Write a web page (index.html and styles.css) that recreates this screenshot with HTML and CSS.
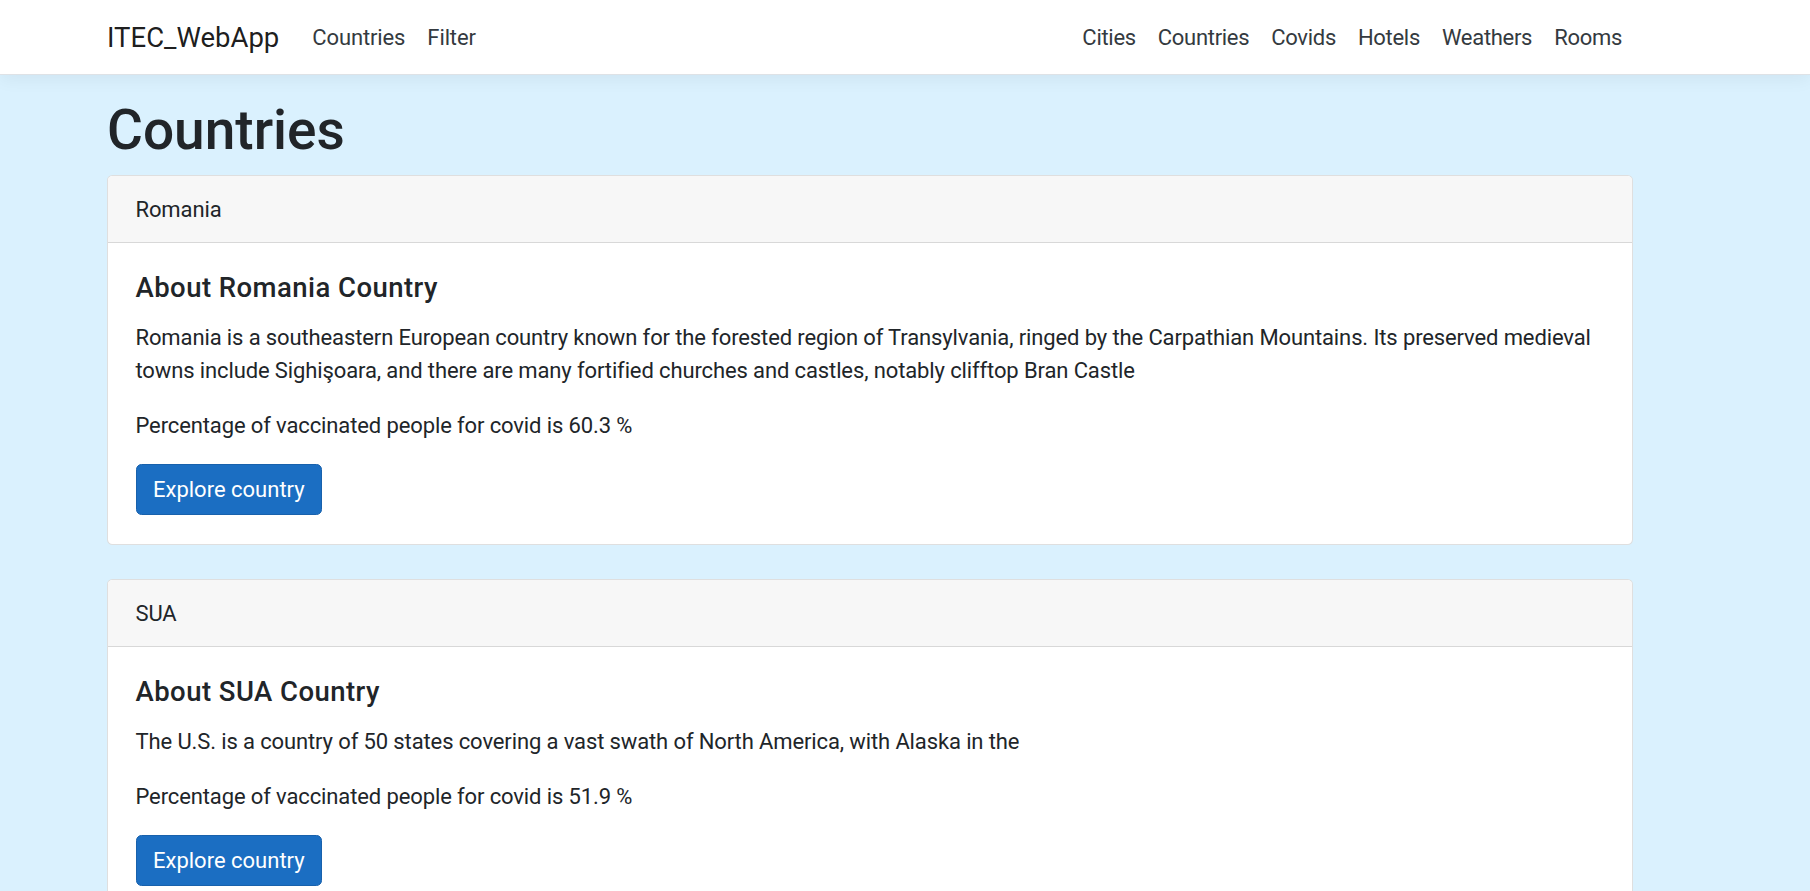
FILE: index.html
```html
<!DOCTYPE html>
<html lang="en">
<head>
<meta charset="utf-8">
<title>Countries - ITEC_WebApp</title>
<link rel="stylesheet" href="styles.css">
</head>
<body>
<nav class="navbar">
  <div class="container nav-inner">
    <a class="brand" href="#">ITEC_WebApp</a>
    <ul class="nav-list">
      <li><a class="nav-link" href="#">Countries</a></li>
      <li><a class="nav-link" href="#">Filter</a></li>
    </ul>
    <ul class="nav-list nav-right">
      <li><a class="nav-link" href="#">Cities</a></li>
      <li><a class="nav-link" href="#">Countries</a></li>
      <li><a class="nav-link" href="#">Covids</a></li>
      <li><a class="nav-link" href="#">Hotels</a></li>
      <li><a class="nav-link" href="#">Weathers</a></li>
      <li><a class="nav-link" href="#">Rooms</a></li>
    </ul>
  </div>
</nav>
<main class="container">
  <h1 class="page-title">Countries</h1>
  <div class="card">
    <div class="card-header">Romania</div>
    <div class="card-body">
      <h5 class="card-title">About Romania Country</h5>
      <p class="card-text">Romania is a southeastern European country known for the forested region of Transylvania, ringed by the Carpathian Mountains. Its preserved medieval towns include Sighişoara, and there are many fortified churches and castles, notably clifftop Bran Castle</p>
      <p class="card-text">Percentage of vaccinated people for covid is 60.3 %</p>
      <a class="btn" href="#">Explore country</a>
    </div>
  </div>
  <div class="card">
    <div class="card-header">SUA</div>
    <div class="card-body">
      <h5 class="card-title">About SUA Country</h5>
      <p class="card-text">The U.S. is a country of 50 states covering a vast swath of North America, with Alaska in the</p>
      <p class="card-text">Percentage of vaccinated people for covid is 51.9 %</p>
      <a class="btn" href="#">Explore country</a>
    </div>
  </div>
</main>
</body>
</html>
```
FILE: styles.css
```css
* { box-sizing: border-box; }
html, body { margin: 0; padding: 0; }
body {
  background: #daf1fe;
  color: #212529;
  font-family: Roboto, "Liberation Sans", sans-serif;
  font-size: 22px;
  line-height: 33px;
  letter-spacing: -0.12px;
}
a { text-decoration: none; }
.container {
  width: 1526px;
  margin-left: 107px;
}
.navbar {
  background: #fff;
  border-bottom: 1px solid #dee2e6;
  box-shadow: 0 5px 16px rgba(0, 0, 0, 0.05);
  margin-bottom: 22px;
}
.nav-inner {
  height: 74px;
  display: flex;
  align-items: center;
}
.brand {
  color: rgba(0, 0, 0, 0.9);
  font-size: 27.5px;
  line-height: 41px;
  margin-right: 22px;
  letter-spacing: 0;
}
.nav-list {
  list-style: none;
  margin: 0;
  padding: 0;
  display: flex;
}
.nav-right { margin-left: auto; }
.nav-link {
  display: block;
  padding: 11px;
  color: #343a40;
  font-size: 22px;
  line-height: 33px;
}
.nav-right .nav-link { letter-spacing: -0.3px; }
.page-title {
  margin: 0 0 12px;
  font-size: 55px;
  line-height: 66px;
  font-weight: 500;
  letter-spacing: 0;
}
.card {
  background: #fff;
  border: 1px solid rgba(0, 0, 0, 0.125);
  border-radius: 5.5px;
  margin-bottom: 34px;
  overflow: hidden;
}
.card-header {
  background: #f7f7f7;
  border-bottom: 1px solid rgba(0, 0, 0, 0.125);
  padding: 16.5px 27.5px;
}
.card-body { padding: 28px 27.5px 29px; }
.card-title {
  margin: 0 0 16.5px;
  font-size: 27.5px;
  line-height: 33px;
  font-weight: 500;
  letter-spacing: 0.45px;
}
.card-text { margin: 0 0 22px; }
.btn {
  display: inline-block;
  padding: 8.25px 16.5px;
  color: #fff;
  background: #1b6ec2;
  border: 1px solid #1861ac;
  border-radius: 5.5px;
  font-size: 22px;
  line-height: 33px;
  letter-spacing: 0;
}
```
